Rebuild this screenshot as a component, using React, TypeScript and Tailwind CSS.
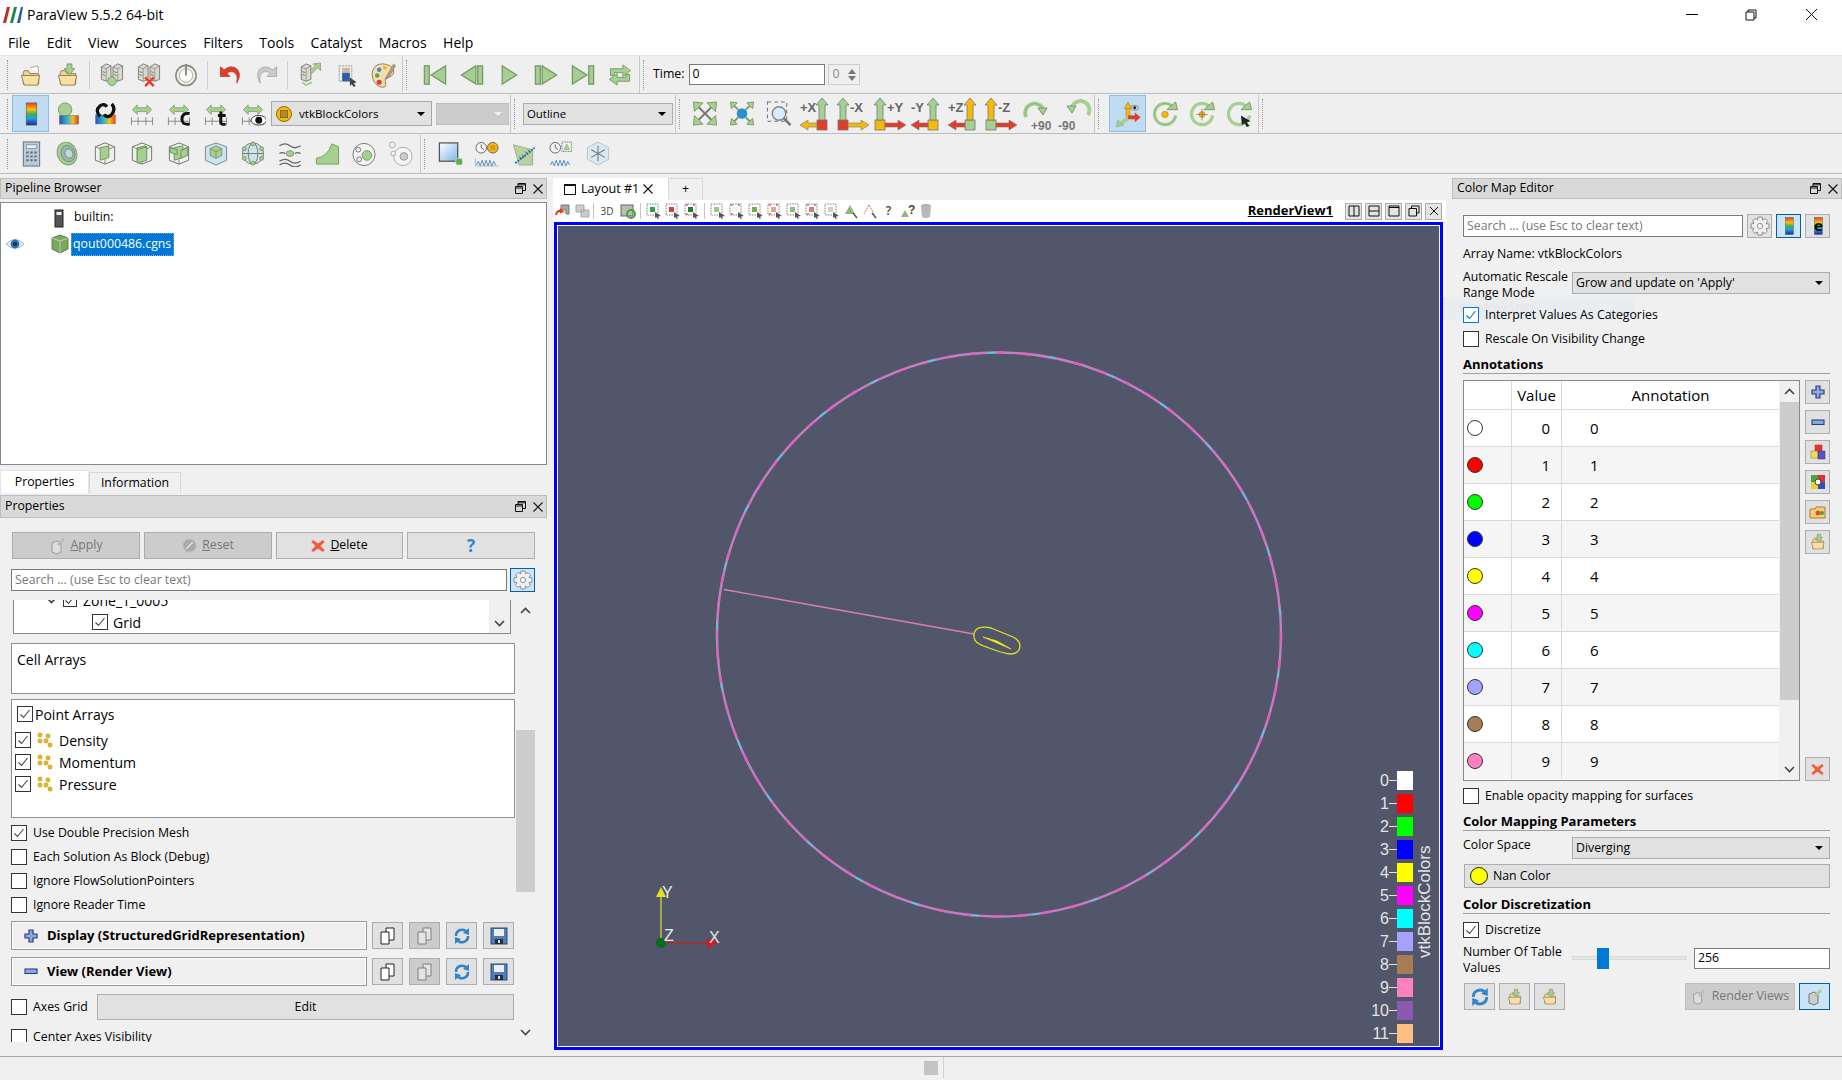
import { ReactNode } from 'react';

const G = '#a6d08f';
const GS = '#7a9a6c';
const R = '#e23d28';
const Y = '#f6b90a';
const BL = '#2a8fd0';
const FOLDER = '#f9dfa6';
const FS = '#8f8052';

// shared svg bits
function Rainbow({ id }: { id: string }) {
    return (
        <defs>
            <linearGradient id={id} x1="0" y1="0" x2="0" y2="1">
                <stop offset="0" stopColor="#e8401c" />
                <stop offset="0.3" stopColor="#f5c010" />
                <stop offset="0.5" stopColor="#40b050" />
                <stop offset="0.7" stopColor="#20a0e0" />
                <stop offset="1" stopColor="#302090" />
            </linearGradient>
        </defs>
    );
}

function RainbowH({ id }: { id: string }) {
    return (
        <defs>
            <linearGradient id={id} x1="0" y1="0" x2="1" y2="0">
                <stop offset="0" stopColor="#3050b0" />
                <stop offset="0.4" stopColor="#30b0d0" />
                <stop offset="0.7" stopColor="#f0c020" />
                <stop offset="1" stopColor="#e04020" />
            </linearGradient>
        </defs>
    );
}

const Folder = ({ arrow }: { arrow?: boolean }) => (
    <>
        <path d="M5 11 V23 H21 V12 H12 L10 9 H6 Z" fill="#f2d48f" stroke={FS} />
        <path d="M3 14 H18 L22 14 L20 24 H6 Z" fill={FOLDER} stroke={FS} />
        {arrow ? <polygon points="12,2 17,2 17,7 20,7 14.5,13 9,7 12,7" fill={G} stroke={GS} /> : <path d="M12 6 L20 4 L21 11" fill="#fff" stroke={FS} strokeWidth={0.7} />}
    </>
);

const Server = ({ x = 0, o = 1 }: { x?: number; o?: number }) => (
    <g opacity={o} transform={`translate(${x} 0)`}>
        <path d="M2 5 L7 2 L12 4 V18 L7 20 L2 18 Z" fill="#d8d8d0" stroke="#7f7f74" />
        <path d="M2 5 L7 7 L12 4 M7 7 V20" fill="none" stroke="#7f7f74" strokeWidth={0.7} />
        <path d="M3 10 L6 11 M3 13 L6 14" stroke="#7f7f74" />
    </g>
);

const Ruler = ({ extra }: { extra?: ReactNode }) => (
    <>
        <polygon points="3,9 8,4 8,7 18,7 18,4 23,9 18,14 18,11 8,11 8,14" fill={G} stroke={GS} strokeWidth={0.8} />
        <path d="M2 21 H24 M2 17 V25 M9 17 V25 M17 17 V25 M24 17 V25" stroke="#888" fill="none" />
        {extra}
    </>
);

const Box = ({ fill = G, extra }: { fill?: string; extra?: ReactNode }) => (
    <>
        <path d="M13 2 L23 6 V20 L13 24 L3 20 V6 Z" fill="#eef0ea" stroke="#6f776a" />
        <path d="M3 6 L13 10 L23 6 M13 10 V24" fill="none" stroke="#6f776a" strokeWidth={0.8} />
        <path d="M8 7 L17 5 V17 L8 20 Z" fill={fill} stroke="#5f7f55" strokeWidth={0.8} />
        {extra}
    </>
);

const Wave = () => <path d="M2 25 l2 -4 l2 5 l2 -6 l2 6 l2 -6 l2 6 l2 -6 l2 6 l2 -5 l2 4" fill="none" stroke="#4a90c8" strokeWidth={1} />;

const Clock = ({ x = 8, y = 8 }: { x?: number; y?: number }) => (
    <g>
        <circle cx={x} cy={y} r={5.5} fill="#f4f4f4" stroke="#666" />
        <path d={`M${x} ${y - 3.5} V${y} L${x + 3} ${y + 2}`} stroke="#666" fill="none" />
    </g>
);

const icons: Record<string, ReactNode> = {
    open: <Folder />,
    load: <Folder arrow />,
    connect: <><Server /><Server x={12} /><circle cx={13} cy={20} r={4.5} fill={G} stroke={GS} /></>,
    disconnect: <><Server /><Server x={12} /><path d="M9 16 L18 25 M18 16 L9 25" stroke={R} strokeWidth={2.5} /></>,
    auto: <><circle cx={13} cy={14} r={10.5} fill="#f0f0e8" stroke="#8a8a80" strokeWidth={1.6} /><circle cx={13} cy={14} r={7} fill="#fafafa" stroke="#aaa" /><path d="M13 2 V14" stroke="#8a8a80" strokeWidth={2} /></>,
    undo: <><path d="M7 8 Q15 2 21 8 Q25 14 20 22 Q22 12 16 10 Q12 9 10 12 L13 15 H3 V5 Z" fill={R} stroke="#a8301c" strokeWidth={0.7} /></>,
    redo: <path d="M19 8 Q11 2 5 8 Q1 14 6 22 Q4 12 10 10 Q14 9 16 12 L13 15 H23 V5 Z" fill="#c8cbc8" stroke="#9a9e9a" strokeWidth={0.7} />,
    saveServer: <><Server x={3} /><polygon points="14,9 20,3 17,2 25,1 25,9 22,6 16,12" fill={G} stroke={GS} strokeWidth={0.7} /><path d="M6 21 L10 24 L16 21" fill="none" stroke={G} strokeWidth={2} /></>,
    pick: <><rect x={6} y={4} width={13} height={16} fill="none" stroke="#999" strokeDasharray="2 1" /><rect x={9} y={11} width={8} height={9} fill="#2a5fa8" /><rect x={9} y={6} width={8} height={5} fill="#c8b8a0" /><polygon points="17,16 24,21 21,22 23,25 21,26 19,23 17,25" fill="#444" /></>,
    palette: <><path d="M12 2 C4 2 1 9 2 15 C3 23 10 27 14 26 C18 25 14 21 16 18 C18 15 23 16 24 11 C25 6 19 2 12 2 Z" fill="#f6dcb4" stroke="#8a7a60" /><circle cx={9} cy={8} r={2.3} fill={BL} /><circle cx={15} cy={6} r={2} fill={Y} /><circle cx={7} cy={14} r={2.4} fill="#50b040" /><circle cx={9} cy={21} r={2.6} fill={R} /><path d="M24 2 L17 14 L15 18 L19 16 L26 4 Z" fill="#b89c70" stroke="#776" strokeWidth={0.6} /></>,
    first: <><rect x={2} y={4} width={5} height={19} fill={G} stroke={GS} strokeWidth={1.4} /><polygon points="24,4 9,13.5 24,23" fill={G} stroke={GS} strokeWidth={1.4} /></>,
    back: <><polygon points="17,4 2,13.5 17,23" fill={G} stroke={GS} strokeWidth={1.4} /><rect x={19} y={4} width={5} height={19} fill={G} stroke={GS} strokeWidth={1.4} /></>,
    play: <polygon points="6,4 21,13.5 6,23" fill={G} stroke={GS} strokeWidth={1.4} />,
    next: <><rect x={2} y={4} width={5} height={19} fill={G} stroke={GS} strokeWidth={1.4} /><polygon points="9,4 24,13.5 9,23" fill={G} stroke={GS} strokeWidth={1.4} /></>,
    last: <><polygon points="2,4 17,13.5 2,23" fill={G} stroke={GS} strokeWidth={1.4} /><rect x={19} y={4} width={5} height={19} fill={G} stroke={GS} strokeWidth={1.4} /></>,
    loop: <><path d="M3 14 V7 H16 V3 L24 9 L16 15 V11 H7 V14 Z" fill={G} stroke={GS} /><path d="M23 13 V20 H10 V24 L2 18 L10 12 V16 H19 V13 Z" fill={G} stroke={GS} /></>,
    legend: <><Rainbow id="lg1" /><rect x={8} y={2} width={11} height={23} fill="url(#lg1)" stroke="#555" strokeWidth={0.6} /></>,
    editMap: <><RainbowH id="lg2" /><circle cx={10} cy={9} r={7} fill={G} stroke={GS} /><rect x={4} y={15} width={20} height={9} fill="url(#lg2)" stroke="#777" strokeWidth={0.6} /></>,
    invert: <><RainbowH id="lg3" /><rect x={3} y={14} width={21} height={10} fill="url(#lg3)" /><path d="M8 16 Q2 10 8 5 Q12 2 15 6 M20 3 Q25 9 19 15 Q15 18 12 14" fill="none" stroke="#111" strokeWidth={3.4} /></>,
    rescale: <Ruler />,
    rescaleC: <Ruler extra={<path d="M24 13 Q16 12 16 19 Q16 25 24 24" fill="none" stroke="#111" strokeWidth={3} />} />,
    rescaleT: <Ruler extra={<path d="M18 11 V22 Q18 25 23 24 M15 15 H23" fill="none" stroke="#111" strokeWidth={3} />} />,
    rescaleV: <Ruler extra={<><ellipse cx={19} cy={20} rx={8} ry={5} fill="#fff" stroke="#333" /><circle cx={19} cy={20} r={3.6} fill="#111" /></>} />,
    calc: <><rect x={5} y={1} width={17} height={25} fill="#b8ccd8" stroke="#5a7080" /><rect x={8} y={4} width={11} height={4} fill="#e8eef2" stroke="#5a7080" strokeWidth={0.6} /><path d="M8 12 H19 M8 16 H19 M8 20 H19" stroke="#5a7080" strokeWidth={2} strokeDasharray="2.5 1.7" /></>,
    contour: <><ellipse cx={12} cy={13} rx={10} ry={12} fill={G} stroke={GS} transform="rotate(-20 12 13)" /><ellipse cx={13} cy={13} rx={7} ry={8.5} fill="#9bb8b0" stroke="#6f8f88" transform="rotate(-20 13 13)" /><ellipse cx={14} cy={13} rx={4} ry={5} fill="#c4d8d0" stroke="#6f8f88" transform="rotate(-20 14 13)" /></>,
    clip: <Box />,
    slice: <Box extra={<path d="M8 9 L18 6 V20 L8 23 Z" fill={G} stroke="#5f7f55" strokeWidth={0.8} />} />,
    extract: <Box extra={<path d="M4 7 L11 9 V14 L4 12 Z M15 10 L22 7 V15 L15 18 Z" fill={G} stroke="#5f7f55" strokeWidth={0.8} />} />,
    thresh: <><path d="M13 2 L24 6 V20 L13 25 L2 20 V6 Z" fill="#cde2ee" stroke="#6f8a98" /><path d="M7 8 L13 5 L19 8 V15 L13 18 L7 15 Z" fill={G} stroke="#6f8a60" strokeWidth={0.8} /><path d="M7 8 L13 11 L19 8 M13 11 V18" stroke="#6f8a60" fill="none" strokeWidth={0.8} /></>,
    probe: <><circle cx={13} cy={13} r={11} fill="#cfe0e8" stroke="#6f7f77" /><ellipse cx={13} cy={13} rx={5} ry={11} fill="none" stroke="#6f7f77" /><path d="M2 13 H24" stroke="#6f7f77" /><circle cx={13} cy={3} r={2} fill={G} stroke={GS} /><circle cx={4} cy={8} r={2} fill={G} stroke={GS} /><circle cx={22} cy={8} r={2} fill={G} stroke={GS} /><circle cx={4} cy={18} r={2} fill={G} stroke={GS} /><circle cx={22} cy={18} r={2} fill={G} stroke={GS} /><circle cx={13} cy={23} r={2} fill={G} stroke={GS} /></>,
    stream: <><path d="M2 5 Q8 1 13 5 T24 5 M2 21 Q8 17 13 21 T24 21 M2 25 Q8 21 13 25 T24 25 M18 13 Q21 11 24 13 M2 13 Q5 11 8 13" fill="none" stroke="#666" strokeWidth={1.3} /><ellipse cx={13} cy={13} rx={4} ry={3} fill={G} stroke={GS} /></>,
    warp: <path d="M2 24 V18 Q14 16 18 3 L25 6 V24 Z" fill={G} stroke={GS} />,
    group: <><circle cx={13} cy={14} r={11.5} fill="#f4f4f0" stroke="#777" /><circle cx={16} cy={15} r={5} fill={G} stroke={GS} /><circle cx={7} cy={9} r={2.5} fill="#eee" stroke="#777" /><circle cx={8} cy={19} r={2.5} fill="#eee" stroke="#777" /></>,
    extractGroup: <><circle cx={15} cy={16} r={9.5} fill="#f6f6f6" stroke="#aaa" /><circle cx={16} cy={16} r={4} fill="#ccc" stroke="#999" /><circle cx={4} cy={4} r={3} fill="#f2f2f2" stroke="#aaa" /><circle cx={5} cy={13} r={2.5} fill="#f2f2f2" stroke="#aaa" /></>,
    selectPlot: <><defs><linearGradient id="lg4" x1="0" y1="0" x2="1" y2="1"><stop offset="0" stopColor="#fff" /><stop offset="1" stopColor="#7db4e6" /></linearGradient></defs><rect x={2} y={2} width={19} height={19} fill="url(#lg4)" stroke="#555" strokeWidth={1.3} /><rect x={19} y={18} width={7} height={7} rx={2} fill="#5cb04c" stroke="#eee" strokeWidth={0.6} /></>,
    plotTime: <><Clock x={7} y={7} /><circle cx={19} cy={7} r={5.5} fill={Y} stroke="#666" /><rect x={16.5} y={4.5} width={5} height={5} fill="#c89a20" /><Wave /><path d="M1 18 V26 H25" stroke="#999" fill="none" strokeWidth={0.6} /></>,
    plotLine: <><path d="M2 4 L22 9 V25 L8 25 Z" fill="#b8d0a4" stroke="#8aa078" strokeWidth={0.7} /><path d="M4 23 L24 7" stroke="#2070c0" strokeWidth={2} strokeDasharray="2 1" /><path d="M8 16 L11 19 M11 14 L14 17 M14 11 L17 14 M17 9 L20 12" stroke="#3a7a3a" /></>,
    plotSel: <><Clock x={7} y={7} /><rect x={14} y={1} width={10} height={10} fill="none" stroke="#777" strokeDasharray="1.5 1" /><polygon points="19,3 22,9 16,9" fill={G} stroke={GS} strokeWidth={0.5} /><Wave /></>,
    snow: <><path d="M13 1 L24 7 V19 L13 25 L2 19 V7 Z" fill="#dbe8f2" stroke="#b0c4d4" /><path d="M13 5 V21 M6 9 L20 17 M20 9 L6 17" stroke="#707880" strokeWidth={1.1} /></>,
    resetView: <><path d="M6 6 L20 20 M20 6 L6 20" stroke="#777" strokeWidth={2} /><g fill={G} stroke={GS}><polygon points="1,1 11,2 2,11" /><polygon points="25,1 15,2 24,11" /><polygon points="1,25 11,24 2,15" /><polygon points="25,25 15,24 24,15" /></g></>,
    zoomData: <><circle cx={13} cy={13} r={5.5} fill={BL} /><g fill={G} stroke={GS}><polygon points="1,1 8,2 2,8" /><polygon points="25,1 18,2 24,8" /><polygon points="1,25 8,24 2,18" /><polygon points="25,25 18,24 24,18" /></g><path d="M5 5 L9 9 M21 5 L17 9 M5 21 L9 17 M21 21 L17 17" stroke={GS} strokeWidth={2} /></>,
    zoomBox: <><rect x={1} y={1} width={20} height={20} fill="none" stroke="#777" strokeWidth={1.1} strokeDasharray="4 3" /><circle cx={13} cy={13} r={7} fill="#d6ecfa" stroke="#888" strokeWidth={1.6} /><path d="M18 18 L25 25" stroke="#777" strokeWidth={2.6} /></>,
    rotP: <><path d="M5 20 A9 9 0 1 1 22 12" fill="none" stroke={G} strokeWidth={4} /><path d="M5 20 A9 9 0 1 1 22 12" fill="none" stroke={GS} strokeWidth={0.6} /><polygon points="17,11 26,11 22,18" fill={G} stroke={GS} /></>,
    rotM: <><path d="M22 18 A9 9 0 1 0 6 10" fill="none" stroke={G} strokeWidth={4} /><polygon points="1,9 10,9 6,16" fill={G} stroke={GS} /></>,
    axesOn: <><rect x={11} y={4} width={4} height={13} fill={Y} stroke="#8a7a30" strokeWidth={0.5} /><polygon points="13,1 17,8 9,8" fill={Y} stroke="#8a7a30" strokeWidth={0.5} /><rect x={13} y={15} width={9} height={4} fill={R} /><polygon points="20,12 26,17 20,22" fill={R} /><path d="M13 18 L5 24" stroke={G} strokeWidth={4} /><polygon points="1,27 2,20 8,25" fill={G} stroke={GS} strokeWidth={0.5} /><ellipse cx={20} cy={7} rx={4} ry={2.6} fill="#ccc" stroke="#555" strokeWidth={0.5} /><circle cx={20} cy={7} r={1.5} fill="#222" /></>,
    cor1: <><path d="M20 5 A11 11 0 1 0 24 15" fill="none" stroke={G} strokeWidth={3.4} /><path d="M20 5 A11 11 0 1 0 24 15" fill="none" stroke={GS} strokeWidth={0.5} /><polygon points="15,9 26,9 24,1" fill={G} stroke={GS} /><circle cx={13} cy={14} r={3.4} fill={Y} stroke="#8a7a30" strokeWidth={0.5} /></>,
    cor2: <><path d="M20 5 A11 11 0 1 0 24 15" fill="none" stroke={G} strokeWidth={3.4} /><polygon points="15,9 26,9 24,1" fill={G} stroke={GS} /><circle cx={13} cy={14} r={3} fill={Y} stroke="#8a7a30" strokeWidth={0.5} /><path d="M13 8 V20 M7 14 H19" stroke="#8a7a30" strokeWidth={0.8} /></>,
    cor3: <><path d="M20 5 A11 11 0 1 0 24 15" fill="none" stroke={G} strokeWidth={3.4} /><polygon points="15,9 26,9 24,1" fill={G} stroke={GS} /><polygon points="15,15 25,21 21,22 24,26 21,27 19,23 16,25" fill="#222" /></>,
};

function Icon({ name, size = 26 }: { name: string; size?: number }) {
    return (
        <svg width={size} height={size} viewBox="0 0 26 27" className="shrink-0">
            {icons[name]}
        </svg>
    );
}

function AxisIcon({ label, side, box, up, horiz }: { label: string; side: 'L' | 'R'; box: string; up: string; horiz: string }) {
    const left = side === 'L';
    return (
        <svg width="34" height="34" viewBox="0 0 34 34" className="shrink-0">
            <rect x={left ? 2 : 18} y={23} width={10} height={10} fill={box} stroke="#777" strokeWidth={0.8} />
            <polygon points={left ? '4,23 4,8 1,8 7,1 13,8 10,8 10,23' : '20,23 20,8 17,8 23,1 29,8 26,8 26,23'} fill={up} stroke="#777" strokeWidth={0.8} />
            <polygon points={left ? '12,26 25,26 25,23 33,28 25,33 25,30 12,30' : '18,26 9,26 9,23 1,28 9,33 9,30 18,30'} fill={horiz} stroke="#777" strokeWidth={0.6} />
            <text x={left ? 14 : 1} y={15} fontSize={13} fontWeight={600} fill="#666" fontFamily="'Liberation Sans', sans-serif">{label}</text>
        </svg>
    );
}

function RotIcon({ name, label, right }: { name: string; label: string; right?: boolean }) {
    return (
        <svg width="34" height="34" viewBox="0 0 34 34" className="shrink-0">
            <g transform={right ? 'translate(8 0)' : ''}>{icons[name]}</g>
            <text x={right ? 0 : 10} y={33} fontSize={12} fontWeight={600} fill="#777" fontFamily="'Liberation Sans', sans-serif">{label}</text>
        </svg>
    );
}

function ToolBtn({ name, active, children }: { name?: string; active?: boolean; children?: ReactNode }) {
    return (
        <div className={`flex h-[37px] w-[37px] shrink-0 items-center justify-center ${active ? 'border border-[#8cbfe8] bg-[#c0dcf3]' : ''}`}>
            {name ? <Icon name={name} /> : children}
        </div>
    );
}

const Handle = () => <div className="mx-[2px] h-[30px] w-[2px] shrink-0 border-l border-dotted border-[#999]" />;
const TbSep = () => <div className="mx-[1px] h-[38px] w-px shrink-0 bg-[#c8c8c8]" />;
const InnerSep = () => <div className="mx-[3px] h-[28px] w-px shrink-0 bg-[#cfcfcf]" />;

function Combo({ text, icon, disabled, className }: { text?: string; icon?: ReactNode; disabled?: boolean; className: string }) {
    return (
        <div className={`flex items-center border pl-[3px] pr-[6px] ${disabled ? 'border-[#bfbfbf] bg-[#cccccc]' : 'border-[#adadad] bg-[#e1e1e1]'} ${className}`}>
            {icon}
            <span className="flex-1 truncate">{text}</span>
            <span className={`h-0 w-0 border-x-[4px] border-t-[4px] border-x-transparent ${disabled ? 'border-t-[#eee]' : 'border-t-black'}`} />
        </div>
    );
}

function Check({ on, blue, className = '' }: { on?: boolean; blue?: boolean; className?: string }) {
    return (
        <span className={`flex h-[16px] w-[16px] shrink-0 items-center justify-center border bg-white ${blue ? 'border-[#0078d7]' : 'border-[#333]'} ${className}`}>
            {on && (
                <svg width="12" height="12" viewBox="0 0 12 12">
                    <path d="M1.5 6.5 L4.5 9.5 L10.5 2" fill="none" stroke={blue ? '#0078d7' : '#444'} strokeWidth={1.1} />
                </svg>
            )}
        </span>
    );
}

function Labeled({ text, on, blue, className = '' }: { text: string; on?: boolean; blue?: boolean; className?: string }) {
    return (
        <div className={`flex h-[16px] items-center gap-[6px] ${className}`}>
            <Check on={on} blue={blue} />
            <span className="whitespace-nowrap">{text}</span>
        </div>
    );
}

const FloatGlyph = () => (
    <svg width="11" height="11" viewBox="0 0 11 11">
        <path d="M3 3 V0.5 H10.5 V7.5 H8 M0.5 3.5 H7.5 V10.5 H0.5 Z M0.5 5 H7.5 M3 1.8 H10.5" fill="none" stroke="#111" />
    </svg>
);

const CloseGlyph = ({ size = 10 }: { size?: number }) => (
    <svg width={size} height={size} viewBox="0 0 10 10">
        <path d="M0.5 0.5 L9.5 9.5 M9.5 0.5 L0.5 9.5" stroke="#111" strokeWidth={1.1} />
    </svg>
);

function DockHeader({ title, className = '' }: { title: string; className?: string }) {
    return (
        <div className={`flex shrink-0 items-center border border-[#bdbdbd] bg-[#d9d9d9] pl-1 pr-[3px] ${className}`}>
            <span className="flex-1">{title}</span>
            <FloatGlyph />
            <span className="ml-[7px]"><CloseGlyph /></span>
        </div>
    );
}

const Chevron = ({ up }: { up?: boolean }) => (
    <svg width="11" height="7" viewBox="0 0 11 7">
        <path d={up ? 'M1 6 L5.5 1.5 L10 6' : 'M1 1 L5.5 5.5 L10 1'} fill="none" stroke="#444" strokeWidth={1.6} />
    </svg>
);

const Gear = ({ size = 20 }: { size?: number }) => (
    <svg width={size} height={size} viewBox="0 0 20 20">
        <path d="M8 1 H12 L12.6 4 L15 2.6 L17.6 5.2 L16 7.6 L19 8 V12 L16 12.6 L17.4 15 L14.8 17.6 L12.4 16 L12 19 H8 L7.4 16 L5 17.4 L2.4 14.8 L4 12.4 L1 12 V8 L4 7.4 L2.6 5 L5.2 2.4 L7.6 4 Z" fill="#eef1f2" stroke="#8a9096" />
        <circle cx={10} cy={10} r={2.6} fill="#fff" stroke="#8a9096" />
    </svg>
);

function SquareBtn({ className = '', children }: { className?: string; children?: ReactNode }) {
    return <div className={`flex shrink-0 items-center justify-center border border-[#adadad] bg-[#e1e1e1] ${className}`}>{children}</div>;
}

function DashDot({ fill, red }: { fill: string; red?: boolean }) {
    return (
        <svg width="16" height="16" viewBox="0 0 16 16">
            <rect x={1} y={1} width={11} height={11} fill="none" stroke="#777" strokeDasharray="1.4 1.2" />
            <rect x={4} y={4} width={5} height={5} fill={fill} />
            {red && <path d="M2 2 H4 M9 2 H11 M2 11 H4" stroke="#d02020" />}
            <polygon points="9,9 15,13 12,13.6 13,15.5 11.5,15.8 10.5,14 9,15" fill="#555" />
        </svg>
    );
}

function Sel3D() {
    return (
        <svg width="16" height="16" viewBox="0 0 16 16">
            <rect x={1} y={2} width={12} height={11} fill="#b8c0b0" stroke="#666" />
            <circle cx={11} cy={11} r={4} fill="none" stroke="#50a040" strokeWidth={2} />
        </svg>
    );
}

const renderTools: ReactNode[] = [
    <svg key="a" width="16" height="16" viewBox="0 0 16 16"><path d="M6 2 H14 V11 H11 V7 H6 Z" fill="#a8a8a0" stroke="#777" /><path d="M1 12 Q2 7 7 8 L5 6 M7 8 L5 10" fill="none" stroke="#d84020" strokeWidth={2} /></svg>,
    <svg key="b" width="16" height="16" viewBox="0 0 16 16"><path d="M2 2 H10 V9 H2 Z M7 7 H15 V14 H7 Z" fill="#ccc" stroke="#aaa" /></svg>,
    <span key="sep1" className="mx-[2px] h-[16px] w-px bg-[#c4c4c4]" />,
    <span key="3d" className="w-[22px] text-center text-[10px] text-[#444]">3D</span>,
    <Sel3D key="3da" />,
    <span key="sep2" className="mx-[3px] h-[16px] w-px bg-[#c4c4c4]" />,
    <DashDot key="c1" fill="#30a040" />,
    <DashDot key="c2" fill="#d04040" />,
    <DashDot key="c3" fill="#208030" red />,
    <span key="sep3" className="mx-[3px] h-[16px] w-px bg-[#c4c4c4]" />,
    <DashDot key="d1" fill="#9cc88a" />,
    <DashDot key="d2" fill="#f4f4f4" red />,
    <DashDot key="d3" fill="#6cb050" />,
    <DashDot key="d4" fill="#e8a090" red />,
    <DashDot key="d5" fill="#8cc080" />,
    <DashDot key="d6" fill="#d08080" red />,
    <DashDot key="d7" fill="#c8d8c0" />,
    <svg key="e1" width="16" height="16" viewBox="0 0 16 16"><polygon points="7,2 12,11 2,11" fill="#8cb87a" /><path d="M10 10 L14 15" stroke="#555" strokeWidth={1.5} /></svg>,
    <svg key="e2" width="16" height="16" viewBox="0 0 16 16"><path d="M7 2 L12 11 M7 2 L2 11" fill="none" stroke="#d07050" strokeDasharray="2 1" /><path d="M10 10 L14 15" stroke="#555" strokeWidth={1.5} /></svg>,
    <span key="e3" className="w-[19px] text-center text-[12px] font-semibold leading-none text-[#444]">?</span>,
    <svg key="e4" width="16" height="16" viewBox="0 0 16 16"><polygon points="5,7 9,14 1,14" fill="#8cb87a" /><text x={8} y={11} fontSize={12} fontWeight={600} fill="#444" fontFamily="'Liberation Sans', sans-serif">?</text></svg>,
    <svg key="e5" width="14" height="16" viewBox="0 0 14 16"><ellipse cx={7} cy={3} rx={5} ry={2} fill="#aaa" /><path d="M2 3 L3 14 Q7 16 11 14 L12 3 Z" fill="#b8b8b8" /></svg>,
];

function ViewToolStrip() {
    return (
        <div className="flex h-[22px] shrink-0 items-center bg-white">
            {renderTools.map((t, i) => (
                <span key={i} className="flex items-center justify-center [&>svg]:mx-[1.5px]">{t}</span>
            ))}
            <span className="ml-auto mr-[12px] text-[13px] font-bold underline">RenderView1</span>
            <div className="flex gap-[3px] pr-[4px]">
                {[
                    <path key="1" d="M1 1 H11 V11 H1 Z M6 1 V11" />,
                    <path key="2" d="M1 1 H11 V11 H1 Z M1 6 H11" />,
                    <path key="3" d="M1 1 H11 V11 H1 Z M1 2.5 H11" />,
                    <path key="4" d="M3.5 3.5 V1 H11 V8 H8.5 M1 3.5 H8.5 V11 H1 Z" />,
                    <path key="5" d="M2 2 L10 10 M10 2 L2 10" />,
                ].map((p, i) => (
                    <SquareBtn key={i} className="h-[17px] w-[17px] !bg-[#e4e4e4]">
                        <svg width="12" height="12" viewBox="0 0 12 12" fill="none" stroke="#111">{p}</svg>
                    </SquareBtn>
                ))}
            </div>
        </div>
    );
}

const legendRows: [string, string][] = [
    ['0', '#ffffff'], ['1', '#ff0000'], ['2', '#00ff00'], ['3', '#0000ff'], ['4', '#ffff00'], ['5', '#ff00ff'],
    ['6', '#00ffff'], ['7', '#a3a3ff'], ['8', '#a67e55'], ['9', '#ff80bf'], ['10', '#8a5ab0'], ['11', '#ffbe80'],
];

function RenderScene() {
    return (
        <svg width="882" height="822" viewBox="557 224 882 822" className="absolute left-0 top-0">
            <circle cx={998} cy={632.5} r={282} fill="none" stroke="#c97ac4" strokeWidth={2.4} />
            <circle cx={998} cy={632.5} r={282} fill="none" stroke="#e060c0" strokeWidth={2.4} strokeDasharray="9 17" />
            <circle cx={998} cy={632.5} r={282} fill="none" stroke="#a890b0" strokeWidth={1.2} strokeDasharray="5 23" strokeDashoffset={11} />
            <circle cx={998} cy={632.5} r={282} fill="none" stroke="#30e0e0" strokeWidth={1.4} strokeDasharray="8 53" strokeDashoffset={25} />
            <path d="M723 587.5 L973 632" stroke="#d880b0" strokeWidth={1.4} />
            <path d="M973 632 C974 625 982 624 990 626 L1012 635 C1022 640 1021 651 1010 652 C1004 652 996 649 988 646 C980 643 972 641 973 632 Z" fill="none" stroke="#e6e01c" strokeWidth={1.3} />
            <path d="M982 635 L1010 647 L996 639 Z" fill="#ffff00" stroke="#e6e01c" strokeWidth={0.8} />
            <path d="M660 941 V894" stroke="#e2e020" strokeWidth={1.2} />
            <polygon points="660,885 665,895 655,895" fill="#e2e020" />
            <path d="M660 941 H708" stroke="#d81818" strokeWidth={1.2} />
            <polygon points="717,941 706,936 706,946" fill="#d81818" />
            <circle cx={660} cy={941} r={5} fill="#0a6a1a" />
            <g fontFamily="'Liberation Sans', sans-serif" fontSize={16} fill="#e8e8e8">
                <text x={661} y={896}>Y</text>
                <text x={663} y={939}>Z</text>
                <text x={708} y={941}>X</text>
            </g>
        </svg>
    );
}

function ColorLegend() {
    return (
        <div className="absolute right-[26px] top-[543px] flex items-start gap-[2px] font-['Liberation_Sans',sans-serif] text-[16px] text-[#e4e4e4]">
            <div className="flex flex-col">
                {legendRows.map(([label, color]) => (
                    <div key={label} className="flex h-[23px] items-center justify-end">
                        <span className="leading-none">{label}</span>
                        <span className="h-px w-[8px] bg-[#e4e4e4]" />
                        <span className="h-[19px] w-[16px]" style={{ background: color }} />
                    </div>
                ))}
            </div>
            <div className="absolute left-[100%] top-[77px] ml-[2px] h-[112px] rotate-180 whitespace-nowrap text-center text-[17px] leading-[20px] [writing-mode:vertical-rl]">vtkBlockColors</div>
        </div>
    );
}

const annotationColors = ['#ffffff', '#ff0000', '#00ff00', '#0000ff', '#ffff00', '#ff00ff', '#00ffff', '#a3a3ff', '#a67e55', '#ff80bf'];

function AnnotationsTable() {
    return (
        <div className="flex h-[401px] w-[337px] overflow-hidden border border-[#8a8a8a] bg-white text-[15px]">
            <div className="w-[315px]">
                <div className="flex h-[28px] items-center">
                    <span className="w-[48px] self-stretch border-r border-[#dadada]" />
                    <span className="flex w-[50px] items-center justify-center self-stretch border-r border-[#dadada]">Value</span>
                    <span className="flex-1 text-center">Annotation</span>
                </div>
                {annotationColors.map((c, i) => (
                    <div key={i} className={`flex h-[37px] items-center border-t border-[#dadada] ${i % 2 ? 'bg-[#f5f5f5]' : 'bg-white'}`}>
                        <span className="flex w-[48px] items-center self-stretch border-r border-[#dadada] pl-[3px]">
                            <span className="h-[16px] w-[16px] rounded-full border border-[#333]" style={{ background: c }} />
                        </span>
                        <span className="flex w-[50px] items-center justify-end self-stretch border-r border-[#dadada] pr-[11px]">{i}</span>
                        <span className="pl-[28px]">{i}</span>
                    </div>
                ))}
            </div>
            <div className="flex flex-1 flex-col items-center bg-[#f0f0f0]">
                <div className="flex h-[21px] items-center"><Chevron up /></div>
                <div className="h-[298px] w-[19px] bg-[#cdcdcd]" />
                <div className="mt-auto flex h-[21px] items-center"><Chevron /></div>
            </div>
        </div>
    );
}

const Plus = () => (
    <svg width="14" height="14" viewBox="0 0 14 14">
        <path d="M5 1 H9 V5 H13 V9 H9 V13 H5 V9 H1 V5 H5 Z" fill="#8ea8dc" stroke="#2b3f88" strokeWidth={1.2} />
    </svg>
);

const Minus = () => (
    <svg width="14" height="7" viewBox="0 0 14 7">
        <rect x={1} y={1} width={12} height={4.5} fill="#8ea8dc" stroke="#2b3f88" strokeWidth={1.1} />
    </svg>
);

const RedX = ({ size = 14 }: { size?: number }) => (
    <svg width={size} height={size} viewBox="0 0 14 14">
        <path d="M2 1 L7 4.5 L12 1 L13.5 3 L9.5 7 L13.5 11 L12 13 L7 9.5 L2 13 L0.5 11 L4.5 7 L0.5 3 Z" fill="#ef5a3a" stroke="#e0a090" strokeWidth={0.4} />
    </svg>
);

const Refresh = ({ size = 18 }: { size?: number }) => (
    <svg width={size} height={size} viewBox="0 0 18 18">
        <path d="M3 9 A6 6 0 0 1 14 5.5" fill="none" stroke="#2f86c8" strokeWidth={2.6} />
        <path d="M15 9 A6 6 0 0 1 4 12.5" fill="none" stroke="#2f86c8" strokeWidth={2.6} />
        <polygon points="16,1 16,8 10,6" fill="#2f86c8" />
        <polygon points="2,17 2,10 8,12" fill="#2f86c8" />
    </svg>
);

const PageCopy = ({ faded }: { faded?: boolean }) => (
    <svg width="18" height="18" viewBox="0 0 18 18" opacity={faded ? 0.45 : 1}>
        <path d="M7 1 H15 V13 H7 Z" fill="#fff" stroke="#222" />
        <path d="M2 5 H10 V17 H2 Z" fill="#fff" stroke="#222" />
    </svg>
);

const Floppy = () => (
    <svg width="18" height="18" viewBox="0 0 18 18">
        <rect x={1} y={1} width={16} height={16} fill="#4f7eb4" stroke="#2a4a78" />
        <rect x={4} y={2} width={10} height={7} fill="#e8eef4" />
        <rect x={5} y={12} width={8} height={5} fill="#22303e" />
        <rect x={8} y={13} width={2} height={3} fill="#cde" />
    </svg>
);

function GroupRow({ icon, title, className = '' }: { icon: ReactNode; title: string; className?: string }) {
    return (
        <div className={`flex h-[29px] items-stretch gap-[5px] ${className}`}>
            <div className="flex w-[356px] items-center border border-[#999] pl-[12px] shadow-[inset_0_0_0_1px_#fff]">
                <span className="flex w-[20px] items-center">{icon}</span>
                <span className="ml-[3px] text-[13px] font-bold">{title}</span>
            </div>
            <SquareBtn className="mt-[1px] h-[27px] w-[31px]"><PageCopy /></SquareBtn>
            <SquareBtn className="ml-[1px] mt-[1px] h-[27px] w-[31px] !bg-[#cccccc]"><PageCopy faded /></SquareBtn>
            <SquareBtn className="ml-[1px] mt-[1px] h-[27px] w-[31px]"><Refresh /></SquareBtn>
            <SquareBtn className="ml-[1px] mt-[1px] h-[27px] w-[31px]"><Floppy /></SquareBtn>
        </div>
    );
}

const DataDots = () => (
    <svg width="16" height="16" viewBox="0 0 16 16" className="mx-[6px]">
        {[[3, 3], [11, 4], [3, 9], [9, 9], [13, 13]].map(([x, y], i) => (
            <circle key={i} cx={x} cy={y} r={2.2} fill="#e8b820" stroke="#a88a20" strokeWidth={0.4} />
        ))}
    </svg>
);

const TinyServer = ({ green }: { green?: boolean }) => (
    <svg width="20" height="22" viewBox="0 0 20 22">
        {green ? (
            <>
                <path d="M10 2 L18 5 V16 L10 20 L2 16 V5 Z" fill="#78a860" stroke="#5f7f50" />
                <path d="M10 8 L18 5 M10 8 L2 5 M10 8 V20" stroke="#c8dcc0" fill="none" strokeWidth={0.8} />
            </>
        ) : (
            <>
                <rect x={6} y={3} width={8} height={17} fill="#555" stroke="#222" />
                <rect x={7.5} y={5} width={5} height={3} fill="#eee" />
            </>
        )}
    </svg>
);

function LeftPanel() {
    return (
        <div className="flex w-[547px] shrink-0 flex-col">
            <DockHeader title="Pipeline Browser" className="h-[21px]" />
            <div className="mt-[3px] h-[263px] border border-[#828790] bg-white">
                <div className="flex h-[26px] items-end pl-[48px]">
                    <TinyServer />
                    <span className="ml-[5px] pb-[3px]">builtin:</span>
                </div>
                <div className="mt-[3px] flex h-[24px] items-center pl-[4px]">
                    <svg width="20" height="14" viewBox="0 0 20 14">
                        <path d="M1 7 Q10 -2 19 7 Q10 16 1 7 Z" fill="#e4eef6" stroke="#a8b8c8" />
                        <circle cx={10} cy={7} r={4.4} fill="#2870b0" />
                        <circle cx={10} cy={7} r={2} fill="#0c2c50" />
                    </svg>
                    <span className="ml-[25px]"><TinyServer green /></span>
                    <span className="ml-[1px] flex h-[23px] w-[103px] items-center whitespace-nowrap border border-dotted border-[#7aa8d8] bg-[#0078d7] pl-[1px] text-white">qout000486.cgns</span>
                </div>
            </div>
            <div className="mt-[5px] flex h-[23px] items-stretch">
                <span className="flex w-[89px] items-center justify-center border border-b-0 border-[#e4e4e4] bg-white">Properties</span>
                <span className="mt-[2px] flex w-[92px] items-center justify-center border border-b-0 border-[#d9d9d9]">Information</span>
            </div>
            <DockHeader title="Properties" className="mt-[2px] h-[23px]" />
            <div className="mt-[14px] flex h-[27px] gap-[4px] px-[12px]">
                <SquareBtn className="w-[128px] gap-[3px] !bg-[#cccccc] text-[#777]">
                    <svg width="18" height="18" viewBox="0 0 18 18"><path d="M3 6 L8 4 L12 6 V15 L8 17 L3 15 Z" fill="#ddd" stroke="#999" /><path d="M9 8 L15 2" stroke="#bbb" strokeWidth={2.6} /></svg>
                    <span><span className="underline">A</span>pply</span>
                </SquareBtn>
                <SquareBtn className="w-[128px] gap-[5px] !bg-[#cccccc] text-[#777]">
                    <svg width="15" height="15" viewBox="0 0 15 15"><circle cx={7.5} cy={7.5} r={6.5} fill="#aaa" stroke="#bbb" /><path d="M4 11 L11 4" stroke="#ddd" strokeWidth={1.6} /></svg>
                    <span><span className="underline">R</span>eset</span>
                </SquareBtn>
                <SquareBtn className="w-[127px] gap-[5px]"><RedX /><span><span className="underline">D</span>elete</span></SquareBtn>
                <SquareBtn className="w-[128px] text-[17px] font-bold leading-none text-[#2f86c8]">?</SquareBtn>
            </div>
            <div className="mt-[9px] flex h-[24px] items-center gap-[3px] pl-[11px]">
                <div className="flex h-[22px] w-[496px] items-center border border-[#7a7a7a] bg-white pl-[3px] text-[#777]">Search ... (use Esc to clear text)</div>
                <SquareBtn className="h-[24px] w-[25px] !border-[#0a5ca8] !bg-[#cce4f7]"><Gear /></SquareBtn>
            </div>
            <div className="mt-[8px] flex h-[442px] overflow-hidden">
                <div className="w-[515px] shrink-0 pl-[11px]">
                    <div className="ml-[2px] flex h-[34px] w-[498px] border-x border-b border-[#8a8a8a] bg-white text-[14px]">
                        <div className="flex flex-1 flex-col justify-end overflow-hidden">
                            <div className="flex h-[22px] shrink-0 items-center pl-[32px]">
                                <Chevron />
                                <Check on className="ml-[6px] !h-[14px] !w-[14px]" />
                                <span className="ml-[6px]">Zone_1_0005</span>
                            </div>
                            <div className="flex h-[22px] shrink-0 items-center pl-[78px]">
                                <Check on />
                                <span className="ml-[5px]">Grid</span>
                            </div>
                        </div>
                        <div className="flex w-[21px] items-end justify-center bg-[#f0f0f0] pb-[6px]"><Chevron /></div>
                    </div>
                    <div className="mt-[9px] h-[51px] w-[504px] border border-[#8a8f9a] bg-white pl-[5px] pt-[5px] text-[14px]">Cell Arrays</div>
                    <div className="mt-[5px] h-[119px] w-[504px] border border-[#8a8f9a] bg-white text-[14px]">
                        <Labeled text="Point Arrays" on className="ml-[5px] mt-[6px] !gap-[2px]" />
                        {['Density', 'Momentum', 'Pressure'].map((n, i) => (
                            <div key={n} className={`ml-[3px] flex h-[22px] items-center ${i === 0 ? 'mt-[7px]' : ''}`}>
                                <Check on />
                                <DataDots />
                                <span>{n}</span>
                            </div>
                        ))}
                    </div>
                    <Labeled text="Use Double Precision Mesh" on className="mt-[7px]" />
                    <Labeled text="Each Solution As Block (Debug)" className="mt-[8px]" />
                    <Labeled text="Ignore FlowSolutionPointers" className="mt-[8px]" />
                    <Labeled text="Ignore Reader Time" className="mt-[8px]" />
                    <GroupRow icon={<Plus />} title="Display (StructuredGridRepresentation)" className="mt-[8px]" />
                    <GroupRow icon={<Minus />} title="View (Render View)" className="mt-[7px]" />
                    <div className="mt-[8px] flex h-[26px] items-center">
                        <Labeled text="Axes Grid" className="w-[86px]" />
                        <SquareBtn className="h-[26px] w-[417px]">Edit</SquareBtn>
                    </div>
                    <Labeled text="Center Axes Visibility" className="mt-[9px]" />
                </div>
                <div className="flex w-[20px] shrink-0 flex-col items-center">
                    <div className="mt-[5px] flex h-[10px] items-center"><Chevron up /></div>
                    <div className="mt-[115px] h-[162px] w-[19px] bg-[#cdcdcd]" />
                    <div className="mb-[6px] mt-auto"><Chevron /></div>
                </div>
            </div>
        </div>
    );
}

function CenterPanel() {
    return (
        <div className="mx-[6px] flex w-[893px] shrink-0 flex-col">
            <div className="flex h-[22px] shrink-0">
                <div className="flex w-[115px] items-center bg-white pl-[11px] text-[12.6px]">
                    <span className="mr-[5px] h-[11px] w-[12px] border border-t-2 border-[#111]" />
                    <span>Layout #1</span>
                    <span className="ml-[4px]"><CloseGlyph /></span>
                </div>
                <div className="mb-[1px] flex w-[35px] items-center justify-center border border-b-0 border-[#d9d9d9]">+</div>
            </div>
            <ViewToolStrip />
            <div className="flex h-[828px] shrink-0 bg-[#f8f8f8] pl-px pr-[3px]">
                <div className="relative flex-1 overflow-hidden border-[3px] border-[#0000ff]">
                    <div className="absolute inset-0 border border-white bg-[#52566a]" />
                    <div className="absolute inset-[1px]">
                        <RenderScene />
                        <ColorLegend />
                    </div>
                </div>
            </div>
        </div>
    );
}

function RightPanel() {
    return (
        <div className="relative flex w-[390px] shrink-0 flex-col">
            <DockHeader title="Color Map Editor" className="h-[21px]" />
            <div className="absolute left-[-9px] top-[119px] flex h-[23px] w-[192px] items-center bg-[#e9edf0] pl-[16px] text-[#e2e4e6]">Window Snip</div>
            <div className="relative flex w-[378px] flex-col pl-[11px]">
                <div className="mt-[15px] flex h-[24px] items-center gap-[4px]">
                    <div className="flex h-[22px] w-[280px] items-center border border-[#7a7a7a] bg-white pl-[3px] text-[#777]">Search ... (use Esc to clear text)</div>
                    <SquareBtn className="h-[24px] w-[25px]"><Gear /></SquareBtn>
                    <SquareBtn className="h-[24px] w-[25px] !border-[#0a5ca8] !bg-[#cce4f7]"><Icon name="legend" size={20} /></SquareBtn>
                    <SquareBtn className="relative h-[24px] w-[25px]">
                        <Icon name="legend" size={20} />
                        <span className="absolute left-[8px] top-[3px] text-[15px] font-bold leading-none text-black">e</span>
                    </SquareBtn>
                </div>
                <div className="mt-[7px] flex h-[18px] items-center">Array Name: vtkBlockColors</div>
                <div className="mt-[6px] flex h-[32px]">
                    <div className="w-[109px] whitespace-nowrap leading-[16px]">Automatic Rescale<br />Range Mode</div>
                    <Combo text="Grow and update on 'Apply'" className="mt-[3px] h-[22px] w-[258px]" />
                </div>
                <Labeled text="Interpret Values As Categories" on blue className="mt-[6px]" />
                <Labeled text="Rescale On Visibility Change" className="mt-[8px]" />
                <div className="mt-[9px] h-[18px] border-b border-[#a0a0a0] text-[13px] font-bold leading-[16px]">Annotations</div>
                <div className="mt-[6px] flex gap-[5px]">
                    <AnnotationsTable />
                    <div className="flex w-[25px] flex-col gap-[6px]">
                        <SquareBtn className="h-[24px]"><Plus /></SquareBtn>
                        <SquareBtn className="h-[24px]"><Minus /></SquareBtn>
                        <SquareBtn className="h-[24px]">
                            <svg width="16" height="16" viewBox="0 0 16 16"><rect x={5} y={1} width={7} height={8} fill="#ee3030" stroke="#933" strokeWidth={0.5} /><rect x={1} y={7} width={7} height={7} fill="#f0e050" stroke="#774" strokeWidth={0.5} /><rect x={8} y={7} width={7} height={8} fill="#6050c8" stroke="#336" strokeWidth={0.5} /></svg>
                        </SquareBtn>
                        <SquareBtn className="h-[24px]">
                            <svg width="16" height="16" viewBox="0 0 16 16"><rect x={1} y={1} width={7} height={7} fill="#50a040" /><rect x={8} y={1} width={7} height={7} fill="#e03030" /><rect x={1} y={8} width={7} height={7} fill="#f0d030" /><rect x={8} y={8} width={7} height={7} fill="#3050c0" /><circle cx={8} cy={8} r={3} fill="#fff" stroke="#444" /></svg>
                        </SquareBtn>
                        <SquareBtn className="h-[24px]">
                            <svg width="18" height="16" viewBox="0 0 18 16"><path d="M1 5 H6 L7 3 H16 V14 H1 Z" fill="#f4d070" stroke="#a08040" /><circle cx={9} cy={9} r={2.5} fill="#e05030" /><circle cx={13} cy={9} r={2} fill="#50a040" /></svg>
                        </SquareBtn>
                        <SquareBtn className="h-[24px]"><Icon name="load" size={18} /></SquareBtn>
                        <SquareBtn className="mt-auto h-[24px]"><RedX size={13} /></SquareBtn>
                    </div>
                </div>
                <Labeled text="Enable opacity mapping for surfaces" className="mt-[7px]" />
                <div className="mt-[9px] h-[18px] border-b border-[#a0a0a0] text-[13px] font-bold leading-[16px]">Color Mapping Parameters</div>
                <div className="mt-[6px] flex h-[22px]">
                    <div className="w-[109px] leading-[16px]">Color Space</div>
                    <Combo text="Diverging" className="h-[22px] w-[258px]" />
                </div>
                <div className="ml-[1px] mt-[5px] flex h-[24px] w-[366px] items-center border border-[#adadad] bg-[#e1e1e1] pl-[5px]">
                    <span className="h-[18px] w-[18px] rounded-full border border-[#222] bg-[#ffff00]" />
                    <span className="ml-[5px]">Nan Color</span>
                </div>
                <div className="mt-[8px] h-[18px] border-b border-[#a0a0a0] text-[13px] font-bold leading-[16px]">Color Discretization</div>
                <Labeled text="Discretize" on className="mt-[8px]" />
                <div className="mt-[6px] flex h-[32px]">
                    <div className="w-[109px] whitespace-nowrap leading-[16px]">Number Of Table<br />Values</div>
                    <div className="relative mt-[4px] h-[21px] w-[115px]">
                        <div className="absolute left-0 top-[8px] h-[4px] w-full border border-[#d8dcd8] bg-[#e4e8e4]" />
                        <div className="absolute left-[25px] top-0 h-[21px] w-[12px] bg-[#0078d7]" />
                    </div>
                    <div className="ml-[7px] mt-[4px] flex h-[21px] w-[136px] items-center border border-[#7a7a7a] bg-white pl-[3px]">256</div>
                </div>
                <div className="mt-[7px] flex h-[27px] gap-[4px] pl-px">
                    <SquareBtn className="w-[31px]"><Refresh size={20} /></SquareBtn>
                    <SquareBtn className="w-[31px]"><Icon name="load" size={18} /></SquareBtn>
                    <SquareBtn className="w-[31px]"><Icon name="load" size={18} /></SquareBtn>
                    <SquareBtn className="ml-auto w-[110px] gap-[5px] !border-[#bfbfbf] !bg-[#cccccc] text-[#777]">
                        <svg width="16" height="18" viewBox="0 0 18 18"><path d="M3 6 L8 4 L12 6 V15 L8 17 L3 15 Z" fill="#ddd" stroke="#999" /><path d="M9 8 L15 2" stroke="#bbb" strokeWidth={2.6} /></svg>
                        Render Views
                    </SquareBtn>
                    <SquareBtn className="w-[31px] !border-[#0a5ca8] !bg-[#cce4f7]">
                        <svg width="18" height="18" viewBox="0 0 18 18"><path d="M3 6 L8 4 L12 6 V15 L8 17 L3 15 Z" fill="#ccc" stroke="#777" /><path d="M9 8 L15 2" stroke={G} strokeWidth={2.6} /></svg>
                    </SquareBtn>
                </div>
            </div>
        </div>
    );
}

function TitleBar() {
    return (
        <div className="flex h-[29px] shrink-0 items-center bg-white pl-[3px]">
            <svg width="20" height="16" viewBox="0 0 20 16" className="mr-[4px]">
                <polygon points="0,16 4,0 7,0 3,16" fill="#c8281e" />
                <polygon points="7,16 11,0 14,0 10,16" fill="#1f8a46" />
                <polygon points="14,16 18,0 20,0 17,16" fill="#1f5aa8" />
            </svg>
            <span className="text-[14px]">ParaView 5.5.2 64-bit</span>
            <div className="ml-auto flex items-center">
                <span className="mr-[47px] h-px w-[12px] bg-black" />
                <svg width="12" height="12" viewBox="0 0 12 12" className="mr-[48px]"><path d="M3 3 V1 H11 V9 H9 M1 3 H9 V11 H1 Z" fill="none" stroke="#111" /></svg>
                <svg width="13" height="13" viewBox="0 0 13 13" className="mr-[24px]"><path d="M1 1 L12 12 M12 1 L1 12" stroke="#111" /></svg>
            </div>
        </div>
    );
}

function MenuBar() {
    const items = ['File', 'Edit', 'View', 'Sources', 'Filters', 'Tools', 'Catalyst', 'Macros', 'Help'];
    return (
        <div className="flex h-[26px] shrink-0 items-center gap-[16.5px] bg-white pl-[8px] text-[14px]">
            {items.map(i => <span key={i}>{i}</span>)}
        </div>
    );
}

function Toolbars() {
    return (
        <>
            <div className="flex h-[39px] shrink-0 items-center border-y border-[#e6e6e6] border-b-[#bcbcbc] bg-[#efefef] pl-[5px]">
                <Handle />
                <div className="w-[1px]" />
                <ToolBtn name="open" /><ToolBtn name="load" />
                <InnerSep />
                <ToolBtn name="connect" /><ToolBtn name="disconnect" /><ToolBtn name="auto" />
                <InnerSep />
                <ToolBtn name="undo" /><ToolBtn name="redo" />
                <div className="mx-[2px] h-[28px] w-px shrink-0 bg-[#cfcfcf]" />
                <ToolBtn name="saveServer" /><ToolBtn name="pick" />
                <ToolBtn name="palette" />
                <TbSep />
                <Handle />
                <div className="w-[6px]" />
                <ToolBtn name="first" /><ToolBtn name="back" /><ToolBtn name="play" /><ToolBtn name="next" /><ToolBtn name="last" /><ToolBtn name="loop" />
                <TbSep />
                <Handle />
                <span className="ml-[6px]">Time:</span>
                <div className="ml-[5px] flex h-[21px] w-[136px] items-center border border-[#7a7a7a] bg-white pl-[2px]">0</div>
                <div className="ml-[3px] flex h-[21px] w-[32px] items-center border border-[#ccc] pl-[3px] text-[#888]">
                    0
                    <div className="ml-auto flex flex-col gap-[2px] pr-[3px]">
                        <span className="h-0 w-0 border-x-[4px] border-b-[5px] border-x-transparent border-b-[#777]" />
                        <span className="h-0 w-0 border-x-[4px] border-t-[5px] border-x-transparent border-t-[#777]" />
                    </div>
                </div>
            </div>
            <div className="flex h-[40px] shrink-0 items-center border-b border-[#bcbcbc] bg-[#efefef] pl-[5px]">
                <Handle />
                <div className="w-[1px]" />
                <ToolBtn name="legend" active />
                <ToolBtn name="editMap" /><ToolBtn name="invert" /><ToolBtn name="rescale" /><ToolBtn name="rescaleC" /><ToolBtn name="rescaleT" /><ToolBtn name="rescaleV" />
                <Combo
                    text="vtkBlockColors"
                    className="h-[25px] w-[161px] text-[11.6px] !border-[#a8a8a8]"
                    icon={
                        <svg width="18" height="18" viewBox="0 0 18 18" className="mr-[6px]">
                            <circle cx={9} cy={9} r={7.5} fill={Y} stroke="#886a10" />
                            <rect x={5.5} y={5.5} width={7} height={7} fill="#b08a30" stroke="#886a10" />
                        </svg>
                    }
                />
                <Combo disabled className="ml-[4px] h-[22px] w-[73px]" />
                <TbSep />
                <Handle />
                <div className="w-[5px]" />
                <Combo text="Outline" className="h-[22px] w-[150px] text-[11.4px]" />
                <div className="w-[1px]" />
                <TbSep />
                <Handle />
                <div className="w-[3px]" />
                <div className="flex">
                    <ToolBtn name="resetView" /><ToolBtn name="zoomData" /><ToolBtn name="zoomBox" />
                    <ToolBtn><AxisIcon label="+X" side="R" box={R} up={G} horiz={Y} /></ToolBtn>
                    <ToolBtn><AxisIcon label="-X" side="L" box={R} up={G} horiz={Y} /></ToolBtn>
                    <ToolBtn><AxisIcon label="+Y" side="L" box={Y} up={G} horiz={R} /></ToolBtn>
                    <ToolBtn><AxisIcon label="-Y" side="R" box={Y} up={G} horiz={R} /></ToolBtn>
                    <ToolBtn><AxisIcon label="+Z" side="R" box={G} up={Y} horiz={R} /></ToolBtn>
                    <ToolBtn><AxisIcon label="-Z" side="L" box={G} up={Y} horiz={R} /></ToolBtn>
                    <ToolBtn><RotIcon name="rotP" label="+90" /></ToolBtn>
                    <ToolBtn><RotIcon name="rotM" label="-90" right /></ToolBtn>
                </div>
                <TbSep />
                <Handle />
                <div className="w-[7px]" />
                <ToolBtn name="axesOn" active /><ToolBtn name="cor1" /><ToolBtn name="cor2" /><ToolBtn name="cor3" />
                <TbSep />
                <Handle />
            </div>
            <div className="flex h-[40px] shrink-0 items-center border-b border-[#bcbcbc] bg-[#efefef] pl-[5px]">
                <Handle />
                <div className="w-[1px]" />
                {['calc', 'contour', 'clip', 'slice', 'extract', 'thresh', 'probe', 'stream', 'warp', 'group', 'extractGroup'].map(n => <ToolBtn key={n} name={n} />)}
                <TbSep />
                <Handle />
                <div className="w-[3px]" />
                {['selectPlot', 'plotTime', 'plotLine', 'plotSel', 'snow'].map(n => <ToolBtn key={n} name={n} />)}
            </div>
        </>
    );
}

export default function App() {
    return (
        <div className="flex h-[1080px] w-[1842px] flex-col overflow-hidden bg-[#f0f0f0] font-['Open_Sans','Noto_Sans',sans-serif] text-[12.3px] text-black">
            <TitleBar />
            <MenuBar />
            <Toolbars />
            <div className="flex h-[882px] shrink-0 pt-[4px]">
                <LeftPanel />
                <CenterPanel />
                <RightPanel />
            </div>
            <div className="flex h-[22px] shrink-0 items-center border-t border-[#a8a8a8] pl-[924px]">
                <span className="h-[14px] w-[14px] bg-[#c4c4c4]" />
                <span className="ml-[5px] h-full w-px bg-[#d0d0d0]" />
            </div>
        </div>
    );
}
